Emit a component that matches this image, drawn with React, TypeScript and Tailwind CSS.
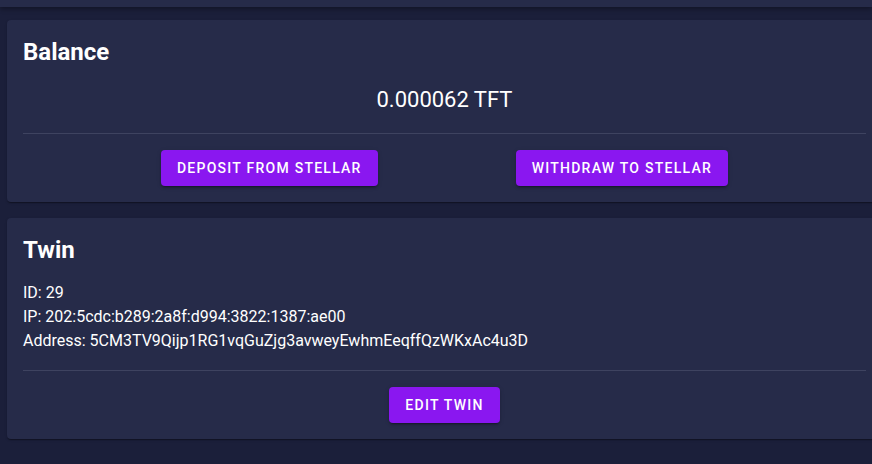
import React from "react";

const font = { fontFamily: "Roboto, 'Liberation Sans', sans-serif" };

function Btn({ children }: { children: React.ReactNode }) {
  return (
    <button className="h-9 rounded px-4 bg-[#8a17f0] text-white text-sm font-medium uppercase tracking-[1.25px] shadow-[0_3px_1px_-2px_rgba(0,0,0,0.2),0_2px_2px_0_rgba(0,0,0,0.14),0_1px_5px_0_rgba(0,0,0,0.12)]">
      {children}
    </button>
  );
}

function Card({ children }: { children: React.ReactNode }) {
  return (
    <div className="rounded bg-[#262b49] p-4 shadow-[0_2px_1px_-1px_rgba(0,0,0,0.2),0_1px_1px_0_rgba(0,0,0,0.14),0_1px_3px_0_rgba(0,0,0,0.12)]">
      {children}
    </div>
  );
}

export default function App() {
  return (
    <div className="w-full h-[464px] overflow-hidden bg-[#1b1f3a] text-white" style={font}>
      <div className="h-[7px] w-full bg-[#262b49] shadow-[0_2px_5px_rgba(0,0,0,0.35)]" />
      <div className="w-[875px] ml-[7px] mt-[13px] flex flex-col gap-4">
        <Card>
          <h2 className="text-2xl leading-8 font-bold">Balance</h2>
          <p className="mt-[18px] text-[22px] leading-7 text-center">0.000062 TFT</p>
          <div className="mt-[19px] h-px bg-[#3e4360]" />
          <div className="mt-4 flex justify-evenly">
            <Btn>Deposit from Stellar</Btn>
            <Btn>Withdraw to Stellar</Btn>
          </div>
        </Card>
        <Card>
          <h2 className="text-2xl leading-8 font-bold">Twin</h2>
          <div className="mt-[15px] text-base leading-6">
            <p>ID: 29</p>
            <p>IP: 202:5cdc:b289:2a8f:d994:3822:1387:ae00</p>
            <p>Address: 5CM3TV9Qijp1RG1vqGuZjg3avweyEwhmEeqffQzWKxAc4u3D</p>
          </div>
          <div className="mt-[17px] h-px bg-[#3e4360]" />
          <div className="mt-4 flex justify-center">
            <Btn>Edit Twin</Btn>
          </div>
        </Card>
      </div>
    </div>
  );
}
